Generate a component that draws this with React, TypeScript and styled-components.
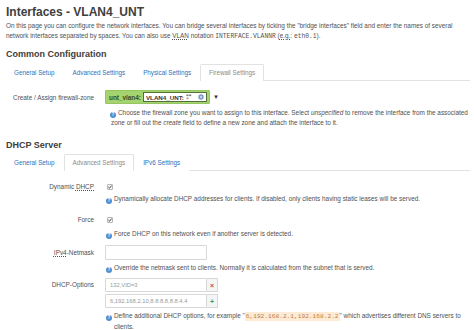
import React from "react";
import styled, { createGlobalStyle } from "styled-components";

const Global = createGlobalStyle`
  html, body { margin: 0; padding: 0; background: #fff; }
  body {
    font-family: "Liberation Sans", Arial, sans-serif;
    color: #505050;
    width: 474px;
    height: 330px;
    overflow: hidden;
  }
`;

const Page = styled.div`
  padding: 5px 4px 0 6px;
`;

const Title = styled.h2`
  margin: 0;
  font-size: 12px;
  line-height: 14px;
  font-weight: bold;
  color: #404040;
`;

const Desc = styled.p`
  margin: 2px 0 0;
  font-size: 6.4px;
  line-height: 10px;
  color: #505050;
  white-space: nowrap;
`;

const Abbr = styled.abbr`
  text-decoration: underline dotted;
  text-underline-offset: 1px;
`;

const Mono = styled.code`
  font-family: "Liberation Mono", monospace;
  font-size: 6.3px;
  color: #505050;
`;

const Highlight = styled.code`
  font-family: "Liberation Mono", monospace;
  font-size: 6.2px;
  color: #c57b3b;
  background: #fdebd5;
  padding: 1px 1px;
`;

const SectionTitle = styled.h3<{ $top: number }>`
  margin: ${(p) => p.$top}px 0 0;
  font-size: 9px;
  line-height: 11px;
  font-weight: bold;
  color: #404040;
`;

const TabList = styled.div<{ $top: number }>`
  display: flex;
  align-items: flex-end;
  margin: ${(p) => p.$top}px 0 0 -1px;
  border-bottom: 1px solid #e2e2e2;
  height: 16px;
`;

const Tab = styled.div<{ $active?: boolean }>`
  padding: 0 8px;
  height: 17px;
  line-height: 15px;
  font-size: 6.3px;
  white-space: nowrap;
  box-sizing: border-box;
  color: ${(p) => (p.$active ? "#8a8a8a" : "#2f6fba")};
  background: #fff;
  border: 1px solid ${(p) => (p.$active ? "#e2e2e2" : "transparent")};
  border-bottom: none;
  border-radius: 2px 2px 0 0;
  margin-bottom: -1px;
`;

const Row = styled.div<{ $top: number }>`
  display: flex;
  align-items: center;
  margin-top: ${(p) => p.$top}px;
`;

const Label = styled.div`
  width: 88px;
  text-align: right;
  font-size: 6.4px;
  color: #505050;
  white-space: nowrap;
  flex: none;
`;

const Field = styled.div`
  margin-left: 11px;
  display: flex;
  align-items: center;
  flex: none;
`;

const Help = styled.div<{ $top: number; $indent: number }>`
  margin: ${(p) => p.$top}px 0 0 ${(p) => 99 + p.$indent}px;
  font-size: 6.4px;
  line-height: 10px;
  color: #505050;
  white-space: nowrap;
`;

const HelpIcon = styled.span`
  display: inline-block;
  width: 6px;
  height: 6px;
  border-radius: 50%;
  background: #4f8fd0;
  color: #fff;
  font-size: 4.6px;
  line-height: 6px;
  text-align: center;
  font-weight: bold;
  vertical-align: -1px;
  margin-right: 2px;
`;

const Check = styled.span`
  display: inline-flex;
  width: 6px;
  height: 6px;
  box-sizing: border-box;
  border: 1px solid #b5b5b5;
  border-radius: 1px;
  background: #f4f4f4;
  margin-left: 2px;
  align-items: center;
  justify-content: center;
`;

const ZoneBox = styled.div`
  display: flex;
  align-items: center;
  width: 105px;
  flex: none;
  height: 14px;
  box-sizing: border-box;
  padding: 0 2px 0 3px;
  background: #a4d46f;
  border: 1px solid #96c562;
  border-radius: 1px;
`;

const ZoneName = styled.span`
  font-size: 6.4px;
  font-weight: bold;
  color: #3a4a28;
  white-space: nowrap;
  flex: none;
`;

const ZoneInput = styled.div`
  display: flex;
  align-items: center;
  margin-left: 2px;
  flex: 1;
  height: 10px;
  box-sizing: border-box;
  border: 1px solid #55703a;
  background: #fff;
  padding: 0 2px;
  font-size: 6.2px;
  font-weight: bold;
  color: #333;
  white-space: nowrap;
`;

const Caret = styled.span`
  font-size: 6px;
  color: #333;
  margin-left: 3px;
`;

const TextInput = styled.div<{ $h: number }>`
  width: 102px;
  height: ${(p) => p.$h}px;
  box-sizing: border-box;
  border: 1px solid #d8d8d8;
  border-radius: 1px;
  background: #fff;
  padding: 0 4px;
  display: flex;
  align-items: center;
  font-size: 5.8px;
  color: #9a9a9a;
  white-space: nowrap;
`;

const Stack = styled.div`
  display: flex;
  flex-direction: column;
  gap: 2px;
`;

const ListRow = styled.div`
  display: flex;
`;

const ListButton = styled.div<{ $color: string }>`
  width: 11px;
  height: 14px;
  box-sizing: border-box;
  border: 1px solid #d8d8d8;
  border-left: none;
  background: #f5f5f5;
  color: ${(p) => p.$color};
  font-size: 7px;
  font-weight: bold;
  display: flex;
  align-items: center;
  justify-content: center;
`;

const OptLabelRow = styled.div`
  display: flex;
  align-items: flex-start;
  margin-top: 5px;
`;

const OptLabel = styled(Label)`
  line-height: 14px;
`;

const CheckMark = () => (
  <svg width="4" height="4" viewBox="0 0 4 4">
    <path d="M0.4 2.1 L1.5 3.2 L3.6 0.6" stroke="#333" strokeWidth="0.9" fill="none" />
  </svg>
);

const Q = () => <HelpIcon>?</HelpIcon>;

export default function App() {
  return (
    <>
      <Global />
      <Page>
        <Title>Interfaces - VLAN4_UNT</Title>
        <Desc>
          On this page you can configure the network interfaces. You can bridge several interfaces by ticking the "bridge interfaces" field and enter the names of several
          <br />
          network interfaces separated by spaces. You can also use <Abbr>VLAN</Abbr> notation <Mono>INTERFACE.VLANNR</Mono> (<Abbr>e.g.</Abbr>: <Mono>eth0.1</Mono>).
        </Desc>

        <SectionTitle $top={7}>Common Configuration</SectionTitle>
        <TabList $top={4}>
          <Tab>General Setup</Tab>
          <Tab>Advanced Settings</Tab>
          <Tab>Physical Settings</Tab>
          <Tab $active>Firewall Settings</Tab>
        </TabList>

        <Row $top={9}>
          <Label>Create / Assign firewall-zone</Label>
          <Field>
            <ZoneBox>
              <ZoneName>unt_vlan4:</ZoneName>
              <ZoneInput>
                VLAN4_UNT:
                <svg width="6" height="6" viewBox="0 0 6 6" style={{ marginLeft: 2 }}>
                  <rect x="0.5" y="0.5" width="2" height="1.6" fill="#777" />
                  <rect x="3.2" y="0.5" width="2" height="1.6" fill="#777" />
                  <rect x="0.5" y="3.5" width="2" height="1.6" fill="#999" />
                </svg>
                <svg width="6" height="6" viewBox="0 0 6 6" style={{ marginLeft: "auto" }}>
                  <circle cx="3" cy="3" r="2.7" fill="#7d9cc4" />
                  <circle cx="3" cy="3" r="1.2" fill="#c9d7ea" />
                </svg>
              </ZoneInput>
            </ZoneBox>
            <Caret>▼</Caret>
          </Field>
        </Row>
        <Help $top={4} $indent={5}>
          <Q />Choose the firewall zone you want to assign to this interface. Select <em>unspecified</em> to remove the interface from the associated
          <br />
          <span style={{ marginLeft: 1 }}>zone or fill out the <em>create</em> field to define a new zone and attach the interface to it.</span>
        </Help>

        <SectionTitle $top={12}>DHCP Server</SectionTitle>
        <TabList $top={3}>
          <Tab>General Setup</Tab>
          <Tab $active>Advanced Settings</Tab>
          <Tab>IPv6 Settings</Tab>
        </TabList>

        <Row $top={12}>
          <Label>
            Dynamic <Abbr>DHCP</Abbr>
          </Label>
          <Field>
            <Check>
              <CheckMark />
            </Check>
          </Field>
        </Row>
        <Help $top={4} $indent={1}>
          <Q />Dynamically allocate DHCP addresses for clients. If disabled, only clients having static leases will be served.
        </Help>

        <Row $top={12}>
          <Label>Force</Label>
          <Field>
            <Check>
              <CheckMark />
            </Check>
          </Field>
        </Row>
        <Help $top={6} $indent={1}>
          <Q />Force DHCP on this network even if another server is detected.
        </Help>

        <Row $top={6}>
          <Label>
            <Abbr>IPv4</Abbr>-Netmask
          </Label>
          <Field>
            <TextInput $h={15} />
          </Field>
        </Row>
        <Help $top={3} $indent={1}>
          <Q />Override the netmask sent to clients. Normally it is calculated from the subnet that is served.
        </Help>

        <OptLabelRow>
          <OptLabel>DHCP-Options</OptLabel>
          <Field>
            <Stack>
              <ListRow>
                <TextInput $h={14}>132,VID=3</TextInput>
                <ListButton $color="#d04848">×</ListButton>
              </ListRow>
              <ListRow>
                <TextInput $h={14}>6,192.168.2.10,8.8.8.8,8.8.4.4</TextInput>
                <ListButton $color="#4a9a4a">+</ListButton>
              </ListRow>
            </Stack>
          </Field>
        </OptLabelRow>
        <Help $top={3} $indent={1}>
          <Q />Define additional DHCP options, for example "<Highlight>6,192.168.2.1,192.168.2.2</Highlight>" which advertises different DNS servers to
          <br />
          <span style={{ marginLeft: 8 }}>clients.</span>
        </Help>
      </Page>
    </>
  );
}
